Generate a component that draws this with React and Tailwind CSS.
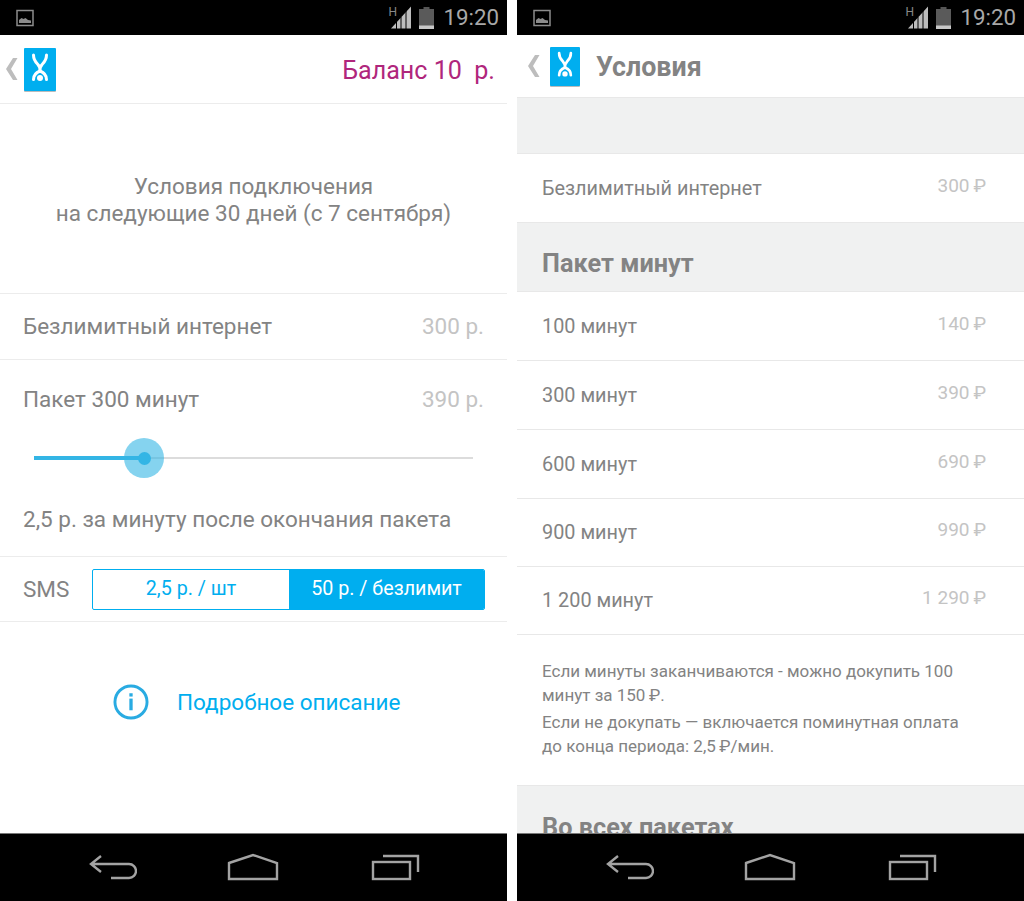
const FONT = 'font-["Roboto",sans-serif]';

function StatusBar({ pl }) {
    return (
        <div className={`flex h-[35px] shrink-0 items-center bg-black ${pl}`}>
            <svg width="18" height="18" viewBox="0 0 18 18" fill="none">
                <rect x="1" y="1.5" width="16" height="15" stroke="#8c8c8c" strokeWidth="1.5" />
                <path d="M3 14v-3l2.5-2 2 1 2-1 2.500 2 3 .5V14z" fill="#8c8c8c" />
            </svg>
            <div className="ml-auto flex items-center pr-2">
                <div className="relative mr-[7px] h-[24px] w-[24px]">
                    <span className="absolute left-0 top-[-1px] text-[12px] leading-[14px] text-[#888]">H</span>
                    <svg className="absolute left-0 top-0" width="24" height="24" viewBox="0 0 24 24">
                        <path d="M3 22.500L23 .5v22z" fill="#bdbdbd" />
                        <path d="M8.500 23V16M13 23V11M18 23V5" stroke="#000" strokeWidth="1" />
                    </svg>
                </div>
                <svg className="mr-[9px]" width="15" height="22" viewBox="0 0 15 22">
                    <rect x="4.500" y="0" width="6" height="2" fill="#555" />
                    <rect x="0" y="2" width="15" height="20" fill="#5a5a5a" />
                    <rect x="0" y="18.500" width="15" height="3.500" fill="#c8c8c8" />
                </svg>
                <span className="text-[22.300px] leading-none text-[#a8a8a8]">19:20</span>
            </div>
        </div>
    );
}

function NavBar() {
    return (
        <div className="mt-auto flex h-[68px] shrink-0 items-center border-t border-[#777] bg-black pb-[1px] pl-[89px]">
            <svg width="48" height="28" viewBox="0 0 48 28" fill="none" stroke="#a3a3a3" strokeWidth="2.400">
                <path d="M12 2L2 10l10 8M2 10h38a6.500 6.500 0 0 1 0 14H22" transform="translate(0 1)" />
            </svg>
            <svg className="ml-[90px]" width="52" height="28" viewBox="0 0 52 28" fill="none" stroke="#a3a3a3" strokeWidth="2.400">
                <path d="M2 10L26 2l24 8v16H2z" />
            </svg>
            <svg className="ml-[92px]" width="50" height="28" viewBox="0 0 50 28" fill="none" stroke="#a3a3a3" strokeWidth="2.400">
                <path d="M12 3h35v16" />
                <rect x="2" y="9" width="37" height="17" />
            </svg>
        </div>
    );
}

function Logo({ small }) {
    return (
        <div className={`flex shrink-0 items-center justify-center rounded-[1px] bg-[#00aeef] shadow-[0_1px_0_#bbb] ${small ? 'h-[39px] w-[30px]' : 'h-[43px] w-[32px]'}`}>
            <svg className={small ? 'mb-[4px] h-[26px] w-[18px]' : 'mb-[4px] h-[28px] w-[20px]'} viewBox="0 0 20 28" fill="none">
                <path d="M3.500 2c0 5 2 7 4 9s2.500 3 2.500 7c0-4 .5-5 2.500-7s4-4 4-9" stroke="#fff" strokeWidth="3" strokeLinecap="round" />
                <path d="M3.500 26.500c0-4 1.500-6.500 6.500-8.500 5 2 6.500 4.500 6.500 8.500" stroke="#fff" strokeWidth="3" strokeLinecap="round" />
                <circle cx="10" cy="25" r="3" fill="#fff" />
            </svg>
        </div>
    );
}

function BackArrow() {
    return (
        <svg width="13" height="22" viewBox="0 0 13 22">
            <path d="M8 0h4.500L6 11l6.500 11H8L1 11z" fill="#bdbdbd" />
        </svg>
    );
}

function Slider() {
    return (
        <div className="relative mx-[34px] mt-[24px] h-[40px]">
            <div className="absolute inset-x-0 top-[19px] h-[2px] bg-[#dcdcdc]" />
            <div className="absolute left-0 top-[18px] h-[4px] w-[110px] bg-[#33b5e5]" />
            <div className="absolute left-[90px] top-0 flex h-[40px] w-[40px] items-center justify-center rounded-full bg-[#33b5e5]/60">
                <div className="h-[13px] w-[13px] rounded-full bg-[#33b5e5]" />
            </div>
        </div>
    );
}

function LeftScreen() {
    return (
        <div className="flex h-[901px] w-[507px] shrink-0 flex-col bg-white">
            <StatusBar pl="pl-[16px]" />
            <div className="flex h-[69px] shrink-0 items-center border-b border-[#ececec] pl-[5px] pr-[12px]">
                <BackArrow />
                <div className="ml-[6px]"><Logo /></div>
                <span className="ml-auto whitespace-pre pt-[4px] text-[25.100px] text-[#b0267c]">Баланс 10  р.</span>
            </div>
            <div className="flex h-[190px] shrink-0 flex-col items-center justify-center border-b border-[#ececec] pt-[2px] text-center text-[22.500px] leading-[27px] text-[#838383]">
                <span>Условия подключения</span>
                <span>на следующие 30 дней (с 7 сентября)</span>
            </div>
            <div className="flex h-[66px] shrink-0 items-center justify-between border-b border-[#ececec] px-[23px] pt-[1px] text-[22.500px]">
                <span className="text-[#838383]">Безлимитный интернет</span>
                <span className="text-[#c4c4c4]">300 р.</span>
            </div>
            <div className="h-[197px] shrink-0 border-b border-[#ececec] pt-[24px]">
                <div className="flex items-center justify-between px-[23px] text-[22.500px] leading-[30px]">
                    <span className="text-[#838383]">Пакет 300 минут</span>
                    <span className="text-[#c4c4c4]">390 р.</span>
                </div>
                <Slider />
                <p className="mt-[26px] px-[23px] text-[22.500px] leading-[30px] text-[#838383]">2,5 р. за минуту после окончания пакета</p>
            </div>
            <div className="flex h-[65px] shrink-0 items-center border-b border-[#ececec] pl-[23px] pr-[22px]">
                <span className="w-[69px] pt-[2px] text-[22.500px] text-[#838383]">SMS</span>
                <div className="flex h-[41px] flex-1 overflow-hidden rounded-[2px] border border-[#00aeef] text-[19.700px]">
                    <div className="flex w-[196px] items-center justify-center text-[#00aeef]">2,5 р. / шт</div>
                    <div className="flex flex-1 items-center justify-center bg-[#00aeef] text-white">50 р. / безлимит</div>
                </div>
            </div>
            <div className="flex h-[160px] shrink-0 items-center pl-[113px]">
                <svg width="36" height="36" viewBox="0 0 37 37" fill="none">
                    <circle cx="18.500" cy="18.500" r="16.500" stroke="#29abe2" strokeWidth="3" />
                    <rect x="16.800" y="15" width="3.400" height="12" fill="#29abe2" />
                    <rect x="16.800" y="9.500" width="3.400" height="3.400" fill="#29abe2" />
                </svg>
                <span className="ml-[28px] pt-[1px] text-[22.500px] text-[#00aeef]">Подробное описание</span>
            </div>
            <NavBar />
        </div>
    );
}

function PriceRow({ label, price, height }) {
    return (
        <div className={`flex shrink-0 items-center justify-between border-b border-[#e8e8e8] bg-white pl-[25px] pr-[38px] ${height}`}>
            <span className="pt-[1px] text-[19.850px] text-[#838383]">{label}</span>
            <span className="pb-[4px] text-[19px] text-[#c4c4c4]">{price}{'\u2009'}₽</span>
        </div>
    );
}

function SectionTitle({ children, height }) {
    return (
        <div className={`flex shrink-0 items-end bg-[#f0f1f1] pl-[25px] text-[25.300px] font-bold text-[#838383] ${height}`}>
            {children}
        </div>
    );
}

function RightScreen() {
    return (
        <div className="flex h-[901px] w-[507px] shrink-0 flex-col overflow-hidden bg-[#f0f1f1]">
            <StatusBar pl="pl-[16px]" />
            <div className="flex h-[63px] shrink-0 items-center border-b border-[#e8e8e8] bg-white pl-[10px]">
                <BackArrow />
                <div className="ml-[10px]"><Logo small /></div>
                <span className="ml-[16px] pt-[3px] text-[26.800px] font-bold text-[#838383]">Условия</span>
            </div>
            <div className="h-[56px] shrink-0 border-b border-[#e8e8e8]" />
            <PriceRow label="Безлимитный интернет" price="300" height="h-[69px]" />
            <SectionTitle height="h-[68px] pb-[8px]">Пакет минут</SectionTitle>
            <div className="shrink-0 border-t border-[#e8e8e8]">
                <PriceRow label="100 минут" price="140" height="h-[69px]" />
                <PriceRow label="300 минут" price="390" height="h-[69px]" />
                <PriceRow label="600 минут" price="690" height="h-[69px]" />
                <PriceRow label="900 минут" price="990" height="h-[68px]" />
                <PriceRow label="1 200 минут" price="1 290" height="h-[68px]" />
            </div>
            <div className="h-[151px] shrink-0 border-b border-[#e8e8e8] bg-white pl-[25px] pt-[24px] text-[17px] leading-[24px] text-[#838383]">
                <p>Если минуты заканчиваются - можно докупить 100<br />минут за 150{'\u2009'}₽.</p>
                <p className="mt-[3px]">Если не докупать — включается поминутная оплата<br />до конца периода: 2,5{'\u2009'}₽/мин.</p>
            </div>
            <div className="h-[47px] shrink-0 overflow-hidden pl-[25px] pt-[27px] text-[25.300px] font-bold leading-[30px] text-[#838383]">Во всех пакетах</div>
            <NavBar />
        </div>
    );
}

export default function App() {
    return (
        <div className={`flex h-[901px] w-[1024px] justify-between overflow-hidden bg-white ${FONT}`}>
            <LeftScreen />
            <RightScreen />
        </div>
    );
}
